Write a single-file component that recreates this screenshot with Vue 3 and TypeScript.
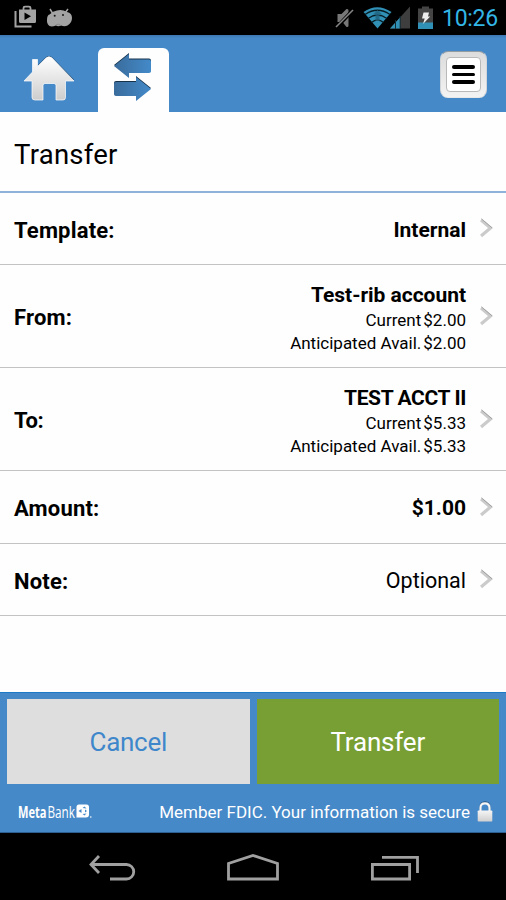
<script setup lang="ts">
interface Row {
  label: string
  value: string
  light?: boolean
  size: string
  details?: { name: string; amount: string }[]
}

const rows: Row[] = [
  { label: 'Template:', value: 'Internal', size: 'r-template' },
  {
    label: 'From:',
    value: 'Test-rib account',
    size: 'tall r-from',
    details: [
      { name: 'Current', amount: '$2.00' },
      { name: 'Anticipated Avail.', amount: '$2.00' },
    ],
  },
  {
    label: 'To:',
    value: 'TEST ACCT II',
    size: 'tall r-to',
    details: [
      { name: 'Current', amount: '$5.33' },
      { name: 'Anticipated Avail.', amount: '$5.33' },
    ],
  },
  { label: 'Amount:', value: '$1.00', size: 'r-amount' },
  { label: 'Note:', value: 'Optional', light: true, size: 'r-note' },
]
</script>

<template>
  <div class="screen">
    <div class="status">
      <svg class="store" width="24" height="24" viewBox="0 0 24 24">
        <path d="M1.500 6v15.500H17.500" fill="none" stroke="#a3a3a3" stroke-width="2" />
        <path d="M9.500 5V3Q9.500 1.700 11 1.700h4Q16.500 1.700 16.500 3V5" fill="none" stroke="#a3a3a3" stroke-width="1.800" />
        <path fill-rule="evenodd" fill="#a3a3a3" d="M5 4.500H22V16.500Q22 18 20.500 18H6.500Q5 18 5 16.500ZM10.500 7.500V15L17 11.300Z" />
      </svg>
      <svg class="droid" width="26" height="20" viewBox="0 0 26 20">
        <path d="M3 1l3 5M21 1l-3 4" stroke="#a3a3a3" stroke-width="1.500" />
        <path fill="#a3a3a3" d="M0 12Q0 7 2.500 6.500Q6 3 10 2.500Q15 1 20 4Q25 5 25 10Q25 15 20.500 17.500Q17.500 19 14 17.500Q11 19 9 17.500Q3 20 1 16.500Q-.2 14.500 0 12Z" />
        <circle cx="7.700" cy="7.700" r="1" fill="#171717" />
        <circle cx="16" cy="7" r="1" fill="#171717" />
        <path d="M9 17q2-2 5 .5" fill="none" stroke="#888" />
      </svg>
      <div class="grow"></div>
      <svg class="signals" width="98" height="26" viewBox="0 0 98 26">
        <path fill="#777" d="M2.500 9h4l5-5q2-.5 2 1.500v15q0 2-2 1.500l-4-5H2.500Z" />
        <path d="M2 22L18 5" stroke="#000" stroke-width="3.500" />
        <path d="M1 22L18 5" stroke="#858585" stroke-width="1.600" />
        <path fill="#3190b5" d="M28.500 7Q42-2.500 56.500 7L42.500 23.500Z" />
        <g fill="none" stroke="#071b23" stroke-width="1.300">
          <path d="M30 9.500Q42.500 1 55 9.500" />
          <path d="M33 13.500Q42.500 6.500 52 13.500" />
          <path d="M36.500 17.500Q42.500 12.500 48.500 17.500" />
        </g>
        <path fill="#20637e" d="M40.500 16V9.500h-2.500l4.500-4.500 4.500 4.500h-2.500v6.500Z" opacity=".8" />
        <path fill="#3e3e3e" d="M75 1.500V23.500H55Z" />
        <path fill="#3190b5" d="M65 12.500V23.500H55Z" />
        <path d="M60.500 15v9M65.200 11v13" stroke="#102b35" stroke-width="1" />
        <path fill="#444" d="M83 3.500H87V1.500h7v2H98V24H83Z" />
        <path fill="#3190b5" d="M83 17.500H98V24H83Z" />
        <path fill="#eee" d="M88.500 7.500h5.500l-1 4h2.200L88 19l1.700-5.500H87Z" />
      </svg>
      <span class="time">10:26</span>
    </div>

    <header class="header">
      <svg class="home" width="54" height="50" viewBox="0 0 54 50">
        <defs>
          <linearGradient id="homeFill" x1="0" y1="0" x2="0" y2="1">
            <stop offset="0" stop-color="#fff" />
            <stop offset="1" stop-color="#cdcdcd" />
          </linearGradient>
        </defs>
        <path d="M15.500 13.500L24 5Q27 2.500 30 5L51.500 27" fill="none" stroke="#315778" stroke-width="1.500" />
        <path fill="url(#homeFill)" stroke="#fff" stroke-width=".7" d="M2 28.500L10.500 19.500V7H15.500V14L24 5.500Q27 3 30 5.500L52 28.500H43.500V45Q43.500 47.500 41 47.500H34V33Q34 31 32 31H23Q21 31 21 33V47.500H13Q10 47.500 10 45V28.500Z" transform="translate(0 -.5)" />
      </svg>
      <div class="tab">
        <svg width="42" height="50" viewBox="0 0 42 50">
          <defs>
            <linearGradient id="arrowFill" x1="0" y1="0" x2="1" y2="0">
              <stop offset="0" stop-color="#3a6c9c" />
              <stop offset="1" stop-color="#438ac9" />
            </linearGradient>
          </defs>
          <g fill="#17334c" transform="translate(0 -1)">
            <path d="M2 13L17 1V6.500H37Q39 6.500 39 8.500V18Q39 20 37 20H17V25Z" />
            <path d="M39 36L24 24V29H4Q2 29 2 31V41Q2 43 4 43H24V48Z" />
          </g>
          <g fill="url(#arrowFill)">
            <path d="M2 13L17 1V6.500H37Q39 6.500 39 8.500V18Q39 20 37 20H17V25Z" />
            <path d="M39 36L24 24V29H4Q2 29 2 31V41Q2 43 4 43H24V48Z" />
          </g>
        </svg>
      </div>
      <div class="grow"></div>
      <button class="menu" type="button">
        <span class="menu-face"><i></i><i></i><i></i></span>
      </button>
    </header>

    <h1 class="title"><span>Transfer</span></h1>

    <div v-for="row in rows" :key="row.label" class="row" :class="row.size">
      <span class="label">{{ row.label }}</span>
      <div class="values">
        <span class="value" :class="{ light: row.light }">{{ row.value }}</span>
        <span v-for="d in row.details" :key="d.name" class="detail">
          <span>{{ d.name }}</span><span class="amount">{{ d.amount }}</span>
        </span>
      </div>
      <svg class="chevron" width="13" height="20" viewBox="0 0 13 20">
        <path d="M1 2L10.500 10L1 18" fill="none" stroke="#cbcbcb" stroke-width="3.200" />
        <path d="M1.300 .8L12 9.800" fill="none" stroke="#a2a2a2" stroke-width="1" />
      </svg>
    </div>

    <footer class="footer">
      <div class="buttons">
        <button class="btn cancel" type="button"><span>Cancel</span></button>
        <button class="btn go" type="button"><span>Transfer</span></button>
      </div>
      <div class="legal">
        <svg class="bank" width="75" height="20" viewBox="0 0 75 20">
          <text x="0" y="15.500" textLength="28.500" lengthAdjust="spacingAndGlyphs" class="bank-bold">Meta</text>
          <text x="29.500" y="15.500" textLength="27.500" lengthAdjust="spacingAndGlyphs">Bank</text>
          <path fill="#fff" d="M61 2.500H68.500Q71 2.500 71 5V12.500Q71 15.500 68 15.500H58.500V5Q58.500 2.500 61 2.500Z" />
          <path fill="#4689c8" d="M60.500 9L63.500 7V11ZM64.500 6L66.500 4.500 68.500 6.500ZM64.500 12L66.500 13.500 68.500 11.500ZM67 7.500L69 9 67 10.500Z" />
          <circle cx="72.800" cy="15" r=".8" fill="#fff" />
        </svg>
        <div class="grow"></div>
        <span class="secure">Member FDIC. Your information is secure</span>
        <svg class="lock" width="16" height="22" viewBox="0 0 16 22">
          <defs>
            <linearGradient id="lockFill" x1="0" y1="0" x2="0" y2="1">
              <stop offset="0" stop-color="#f5f5f5" />
              <stop offset="1" stop-color="#cfcfcf" />
            </linearGradient>
          </defs>
          <path d="M3.500 10V6.500Q3.500 1.300 8 1.300T12.500 6.500V10" fill="none" stroke="#28567f" stroke-width="2" />
          <path d="M3.500 11V7Q3.500 2.300 8 2.300T12.500 7V11" fill="none" stroke="#f7f7f7" stroke-width="2.200" />
          <rect x=".7" y="9.500" width="14.600" height="11" rx=".8" fill="url(#lockFill)" />
        </svg>
      </div>
    </footer>

    <nav class="nav">
      <svg width="50" height="30" viewBox="0 0 50 30">
        <path d="M12 3L4 11.500L12 20M4 11.500H39.500A7 7 0 0 1 39.500 26H23" fill="none" stroke="#a0a0a0" stroke-width="2.800" />
      </svg>
      <svg width="56" height="30" viewBox="0 0 56 30">
        <path d="M2.500 26V10.500L27 2.500L51.500 10.500V26Z" fill="none" stroke="#a0a0a0" stroke-width="2.800" />
      </svg>
      <svg width="50" height="30" viewBox="0 0 50 30">
        <path d="M2.400 11.500H39.600V26H2.400Z" fill="none" stroke="#a0a0a0" stroke-width="2.800" />
        <path d="M12 4.400H47.500V20" fill="none" stroke="#a0a0a0" stroke-width="2.800" />
      </svg>
    </nav>
  </div>
</template>

<style>
body {
  margin: 0;
}
</style>

<style scoped>
.screen {
  width: 506px;
  height: 900px;
  display: flex;
  flex-direction: column;
  background: #fefefe;
  color: #000;
  font-family: Roboto, 'Liberation Sans', sans-serif;
  overflow: hidden;
}
svg {
  display: block;
  flex: none;
}
.grow {
  flex: 1;
}
button {
  border: 0;
  padding: 0;
  font-family: inherit;
}
.status {
  height: 35px;
  flex: none;
  display: flex;
  align-items: flex-start;
  background: #000;
  padding: 0 9px 0 14px;
}
.store {
  margin-top: 5px;
}
.droid {
  margin: 8px 0 0 9px;
}
.signals {
  margin: 5px 0 0;
}
.time {
  width: 55px;
  margin-left: 9px;
  font-size: 23px;
  line-height: 37px;
  letter-spacing: -0.3px;
  color: #33b5e5;
  white-space: nowrap;
}
.header {
  height: 77px;
  flex: none;
  display: flex;
  align-items: flex-start;
  background: linear-gradient(#3b76ae 0, #4689c8 3px);
}
.home {
  margin: 18px 0 0 22px;
}
.tab {
  width: 71px;
  height: 64px;
  margin: 13px 0 0 22px;
  background: #fefefe;
  border-radius: 6px 6px 0 0;
}
.tab svg {
  margin: 5px 0 0 14px;
}
.menu {
  width: 47px;
  height: 47px;
  margin: 16px 19px 0 0;
  padding: 5px;
  box-sizing: border-box;
  border-radius: 8px;
  background: linear-gradient(#dcdcdc, #f3f3f3);
  border: 1px solid #bfc5ca;
  border-color: #929ca5 #d0d5da #e8e8e8;
}
.menu-face {
  height: 35px;
  box-sizing: border-box;
  display: flex;
  flex-direction: column;
  align-items: center;
  justify-content: center;
  gap: 4px;
  background: #fff;
  border: 1px solid #b9b9b9;
  border-radius: 4px;
}
.menu-face i {
  width: 23px;
  height: 3.400px;
  border-radius: 2px;
  background: #000;
}
.title {
  height: 79px;
  flex: none;
  margin: 0;
  padding: 0 14px;
  border-bottom: 2px solid #8fb1da;
  font-size: 27.500px;
  line-height: 85px;
  font-weight: 400;
}
.title span {
  letter-spacing: 0.25px;
}
.row {
  height: 72px;
  flex: none;
  box-sizing: border-box;
  display: flex;
  align-items: center;
  padding: 0 13px 0 14px;
  border-bottom: 1px solid #c3c3c3;
}
.tall {
  height: 103px;
}
.r-amount {
  height: 73px;
}
.label,
.value {
  line-height: 26px;
  font-weight: 700;
}
.label {
  flex: 1;
  font-size: 22px;
  letter-spacing: 0.18px;
  padding-top: 4px;
}
.r-to .label {
  letter-spacing: -0.3px;
}
.values {
  display: flex;
  flex-direction: column;
  align-items: flex-end;
  padding-top: 2px;
}
.value {
  font-size: 21px;
}
.r-from .value {
  letter-spacing: -0.03px;
}
.r-to .value {
  letter-spacing: -0.38px;
}
.value.light {
  font-weight: 400;
  font-size: 21.500px;
}
.tall .values {
  padding-top: 5px;
}
.tall .value {
  line-height: 27px;
}
.detail {
  display: flex;
  font-size: 17px;
  line-height: 23px;
}
.amount {
  margin-left: 2px;
}
.chevron {
  margin: 0 0 1px 14px;
}
.footer {
  height: 141px;
  flex: none;
  margin-top: auto;
  box-sizing: border-box;
  background: #4689c8;
  border-top: 1px solid #1b7bc4;
  border-bottom: 1px solid #2e5f90;
}
.buttons {
  display: flex;
  gap: 7px;
  padding: 6px 7px 0;
}
.btn {
  flex: 1;
  height: 84.500px;
  font-size: 26px;
  line-height: 30px;
  box-sizing: border-box;
  padding-top: 2px;
}
.cancel {
  background: #dedede;
  color: #3f87cb;
}
.cancel span {
  letter-spacing: -0.3px;
}
.go {
  background: #789f33;
  color: #fff;
}
.go span {
  letter-spacing: -0.2px;
}
.legal {
  height: 48px;
  display: flex;
  align-items: center;
  padding: 0 13px 0 18px;
  margin-top: 4px;
  color: #fff;
}
.bank text {
  font-family: 'Open Sans', 'Liberation Sans', sans-serif;
  font-size: 15.500px;
  font-weight: 500;
  fill: #fff;
}
.bank .bank-bold {
  font-weight: 700;
}
.secure {
  font-size: 17px;
  white-space: nowrap;
}
.lock {
  margin-left: 7px;
}
.nav {
  height: 67px;
  flex: none;
  display: flex;
  justify-content: space-between;
  align-items: flex-start;
  box-sizing: border-box;
  padding: 20px 86px 0 87px;
  background: #000;
}
</style>
